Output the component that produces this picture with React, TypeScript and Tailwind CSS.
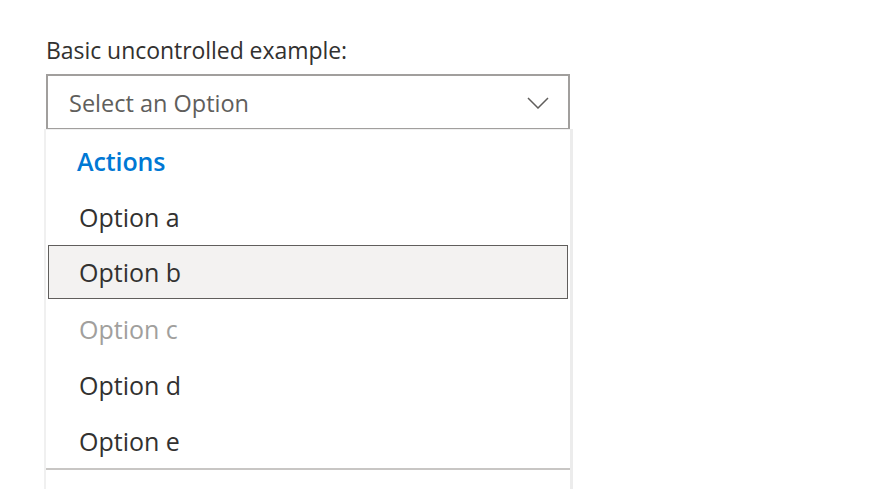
import React from "react";

const font = { fontFamily: '"Open Sans", "Noto Sans", sans-serif' };

export default function App() {
  const options = [
    { label: "Option a" },
    { label: "Option b", hover: true },
    { label: "Option c", disabled: true },
    { label: "Option d" },
    { label: "Option e" },
  ];
  return (
    <div className="w-[886px] h-[489px] overflow-hidden bg-white" style={font}>
      <div className="pl-[46px] pt-[33px] w-[570px]">
        <div className="text-[23px] leading-[34px] text-[#323130] tracking-[-0.05px]">Basic uncontrolled example:</div>
        <div className="mt-[7px] h-[56px] border-2 border-[#a19f9d] flex items-center justify-between pl-[21px] pr-[18px]">
          <span className="text-[23.5px] leading-[34px] pt-[2px] text-[#605e5c]">Select an Option</span>
          <svg width="22" height="12" viewBox="0 0 22 12" className="mr-[1px] mt-[1px]">
            <path d="M1 1 L11 11 L21 1" fill="none" stroke="#605e5c" strokeWidth="1.5" />
          </svg>
        </div>
        <div className="bg-white pt-[3px] shadow-[-1px_0_0_1px_#f0f0f0,2px_0_0_1px_#ececec] h-[400px]">
          <div className="h-[56px] flex items-center pl-[31px] pt-[2px] text-[25px] font-semibold text-[#0078d4] tracking-[-0.1px]">
            Actions
          </div>
          {options.map((o) => (
            <div key={o.label} className="h-[56px] px-[2px]">
              {o.hover ? (
                <div className="h-[54px] border border-[#605e5c] bg-[#f3f2f1] flex items-center pt-[2px] pl-[30px] text-[25px] text-[#323130]">
                  {o.label}
                </div>
              ) : (
                <div
                  className={
                    "h-[56px] flex items-center pt-[2px] pl-[31px] text-[25px] " +
                    (o.disabled ? "text-[#a19f9d]" : "text-[#323130]")
                  }
                >
                  {o.label}
                </div>
              )}
            </div>
          ))}
          <div className="h-[2px] bg-[#c8c6c4] -mt-[1px]" />
        </div>
      </div>
    </div>
  );
}
